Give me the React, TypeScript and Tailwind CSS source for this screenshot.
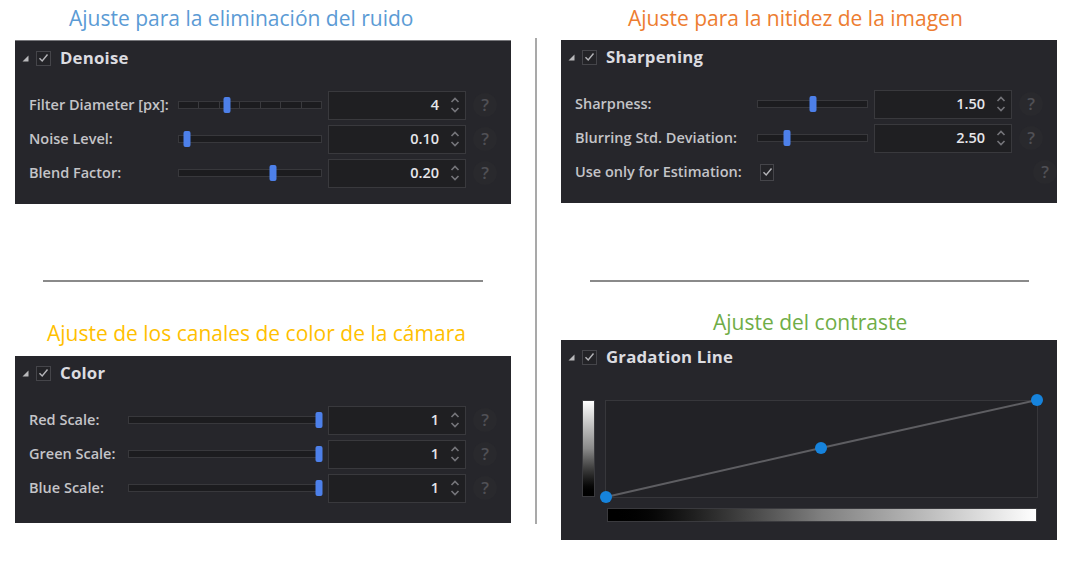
import React from "react";

const ui = { fontFamily: '"Open Sans", "Noto Sans", sans-serif' };
const titleFont = { fontFamily: '"Open Sans", "Noto Sans", sans-serif' };

function Triangle() {
  return (
    <svg width="7" height="7" viewBox="0 0 7 7" className="shrink-0">
      <polygon points="6.5,0.5 6.5,6.5 0.5,6.5" fill="#b9b9bc" />
    </svg>
  );
}

function CheckBox({ size = 15 }: { size?: number }) {
  return (
    <div
      className="flex items-center justify-center border border-[#45454a] bg-[#232327]"
      style={{ width: size, height: size }}
    >
      <svg width="11" height="10" viewBox="0 0 11 10">
        <polyline points="1.5,5.2 4.2,8 9.5,1.5" fill="none" stroke="#b4b4b8" strokeWidth="1.4" />
      </svg>
    </div>
  );
}

function PanelHeader({ title }: { title: string }) {
  return (
    <div className="flex h-[34px] items-center pl-[7px]">
      <Triangle />
      <div className="ml-[7px]">
        <CheckBox />
      </div>
      <span className="ml-[9px] text-[16.8px] font-bold tracking-[0.2px] text-[#dcdce0]">{title}</span>
    </div>
  );
}

function Slider({ width, pos, ticks = 0 }: { width: number; pos: number; ticks?: number }) {
  return (
    <div className="relative h-[8px] border border-[#38383c] bg-[#1c1c1f]" style={{ width }}>
      {ticks > 0 && (
        <div className="flex h-full">
          {Array.from({ length: ticks }).map((_, i) => (
            <div key={i} className="h-full flex-1 border-r border-[#3a3a3e] last:border-r-0" />
          ))}
        </div>
      )}
      <div
        className="absolute top-1/2 h-[16px] w-[7px] -translate-x-1/2 -translate-y-1/2 rounded-[2px] bg-[#4d80ea]"
        style={{ left: pos }}
      />
    </div>
  );
}

function SpinArrows() {
  return (
    <svg width="10" height="18" viewBox="0 0 10 18">
      <polyline points="1.5,6 5,2.5 8.5,6" fill="none" stroke="#75757a" strokeWidth="1.6" />
      <polyline points="1.5,12 5,15.5 8.5,12" fill="none" stroke="#75757a" strokeWidth="1.6" />
    </svg>
  );
}

function SpinBox({ value }: { value: string }) {
  return (
    <div className="flex h-[29px] w-[138px] items-center justify-end border border-[#39393d] bg-[#1f1f22] pr-[5px]">
      <span className="text-[14.5px] font-semibold text-[#e6e6ea]">{value}</span>
      <div className="ml-[11px]">
        <SpinArrows />
      </div>
    </div>
  );
}

function Help() {
  return (
    <div className="ml-[7px] flex h-[24px] w-[24px] items-center justify-center rounded-full bg-[#29292d] text-[17px] font-semibold text-[#505055]">
      ?
    </div>
  );
}

interface RowProps {
  label: string;
  labelWidth: number;
  sliderWidth: number;
  pos: number;
  value: string;
  ticks?: number;
}

function Row({ label, labelWidth, sliderWidth, pos, value, ticks }: RowProps) {
  return (
    <div className="flex h-[34px] items-center pl-[14px]">
      <div className="shrink-0 whitespace-nowrap text-[14.5px] font-semibold text-[#c4c4c8]" style={{ width: labelWidth }}>
        {label}
      </div>
      <Slider width={sliderWidth} pos={pos} ticks={ticks} />
      <div className="ml-[6px]">
        <SpinBox value={value} />
      </div>
      <Help />
    </div>
  );
}

function Panel({ title, height, children, topLine = false }: { title: string; height: number; children: React.ReactNode; topLine?: boolean }) {
  return (
    <div
      className={`w-[496px] bg-[#26262b] ${topLine ? "border-t border-[#77777b]" : ""}`}
      style={{ height, ...ui }}
    >
      <PanelHeader title={title} />
      <div className="mt-[13px]">{children}</div>
    </div>
  );
}

function GradationPanel() {
  return (
    <div className="w-[496px] bg-[#26262b]" style={{ height: 200, ...ui }}>
      <PanelHeader title="Gradation Line" />
      <div className="mt-[26px] flex pl-[21px]">
        <div className="h-[97px] w-[13px] border border-[#3a3a3e] bg-linear-to-b from-white via-[#8a8a8a] to-black" />
        <div className="ml-[10px] flex flex-col">
          <svg width="434" height="99" viewBox="0 0 434 99" className="overflow-visible">
            <rect x="0.5" y="0.5" width="432" height="97" fill="#222226" stroke="#37373b" />
            <polyline points="1,97 216,48 432,0" fill="none" stroke="#5e5e62" strokeWidth="2" />
            <circle cx="1" cy="97" r="6" fill="#1683dc" />
            <circle cx="216" cy="48" r="6" fill="#1683dc" />
            <circle cx="432" cy="0" r="6" fill="#1683dc" />
          </svg>
          <div className="ml-[2px] mt-[9px] h-[14px] w-[430px] border border-[#3a3a3e] bg-linear-to-r from-black via-[#808080] to-white" />
        </div>
      </div>
    </div>
  );
}

function Title({ text, color, pad }: { text: string; color: string; pad: number }) {
  return (
    <div className="whitespace-nowrap text-[21px] leading-[28px]" style={{ color, paddingLeft: pad, ...titleFont }}>
      {text}
    </div>
  );
}

export default function App() {
  return (
    <div className="flex h-[564px] w-[1074px] bg-white">
      {/* left column */}
      <div className="flex w-[535px] flex-col">
        <div className="flex h-[40px] items-center pb-[4px]">
          <Title text="Ajuste para la eliminación del ruido" color="#5b9bd5" pad={69} />
        </div>
        <div className="ml-[15px]">
          <Panel title="Denoise" height={164} topLine>
            <Row label="Filter Diameter [px]:" labelWidth={149} sliderWidth={144} pos={48} value="4" ticks={7} />
            <Row label="Noise Level:" labelWidth={149} sliderWidth={144} pos={8} value="0.10" />
            <Row label="Blend Factor:" labelWidth={149} sliderWidth={144} pos={94} value="0.20" />
          </Panel>
        </div>
        <div className="ml-[43px] mt-[76px] h-[2px] w-[440px] bg-[#8a8a8a]" />
        <div className="flex h-[74px] items-end pb-[9px]">
          <Title text="Ajuste de los canales de color de la cámara" color="#ffc000" pad={47} />
        </div>
        <div className="ml-[15px]">
          <Panel title="Color" height={167}>
            <Row label="Red Scale:" labelWidth={99} sliderWidth={194} pos={190} value="1" />
            <Row label="Green Scale:" labelWidth={99} sliderWidth={194} pos={190} value="1" />
            <Row label="Blue Scale:" labelWidth={99} sliderWidth={194} pos={190} value="1" />
          </Panel>
        </div>
      </div>

      {/* divider */}
      <div className="mt-[38px] h-[486px] w-[2px] bg-[#a9a9a9]" />

      {/* right column */}
      <div className="flex flex-1 flex-col">
        <div className="flex h-[40px] items-center pb-[4px]">
          <Title text="Ajuste para la nitidez de la imagen" color="#ed7d31" pad={91} />
        </div>
        <div className="ml-[24px]">
          <Panel title="Sharpening" height={163}>
            <Row label="Sharpness:" labelWidth={182} sliderWidth={111} pos={55} value="1.50" />
            <Row label="Blurring Std. Deviation:" labelWidth={182} sliderWidth={111} pos={29} value="2.50" />
            <div className="flex h-[34px] items-center pl-[14px]">
              <div className="w-[185px] shrink-0 whitespace-nowrap text-[14.5px] font-semibold text-[#c4c4c8]">Use only for Estimation:</div>
              <CheckBox size={17} />
              <div className="ml-[252px]">
                <Help />
              </div>
            </div>
          </Panel>
        </div>
        <div className="ml-[53px] mt-[77px] h-[2px] w-[439px] bg-[#8a8a8a]" />
        <div className="flex h-[58px] items-end pb-[4px]">
          <Title text="Ajuste del contraste" color="#70ad47" pad={176} />
        </div>
        <div className="ml-[24px]">
          <GradationPanel />
        </div>
      </div>
    </div>
  );
}
